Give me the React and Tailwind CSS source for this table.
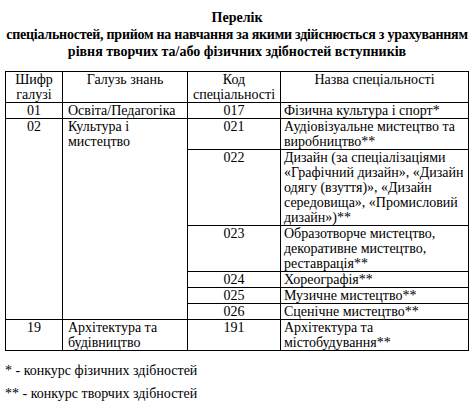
import React from 'react';

const rows = [
  { code: '017', name: 'Фізична культура і спорт*' },
  { code: '021', name: 'Аудіовізуальне мистецтво та виробництво**' },
  { code: '022', name: 'Дизайн (за спеціалізаціями «Графічний дизайн», «Дизайн одягу (взуття)», «Дизайн середовища», «Промисловий дизайн»)**' },
  { code: '023', name: 'Образотворче мистецтво, декоративне мистецтво, реставрація**' },
  { code: '024', name: 'Хореографія**' },
  { code: '025', name: 'Музичне мистецтво**' },
  { code: '026', name: 'Сценічне мистецтво**' },
];

const cell = 'border border-black align-top px-[3px] py-0 font-normal';
const field = 'border border-black align-top pl-[5px] pr-[3px] py-0 font-normal';

export default function App() {
  return (
    <div className="bg-white text-black w-[474px] h-[414px] overflow-hidden pt-[9px] font-['Liberation_Serif',serif]">
      <div className="text-center font-bold text-[14px] leading-[17px]">
        <p>Перелік</p>
        <p className="whitespace-nowrap tracking-[-0.25px]">
          спеціальностей, прийом на навчання за якими здійснюється з урахуванням
        </p>
        <p>рівня творчих та/або фізичних здібностей вступників</p>
      </div>

      <table className="ml-[5px] mt-[11px] w-[463px] border-collapse table-fixed text-[14px] leading-[15px]">
        <colgroup>
          <col className="w-[57px]" />
          <col className="w-[125px]" />
          <col className="w-[93px]" />
          <col className="w-[188px]" />
        </colgroup>
        <thead>
          <tr>
            <th className={`${cell} text-center`}>Шифр<br />галузі</th>
            <th className={`${cell} text-center`}>Галузь знань</th>
            <th className={`${cell} text-center`}>Код<br />спеціальності</th>
            <th className={`${cell} text-center`}>Назва спеціальності</th>
          </tr>
        </thead>
        <tbody>
          <tr>
            <td className={`${cell} text-center`}>01</td>
            <td className={field}>Освіта/Педагогіка</td>
            <td className={`${cell} text-center`}>{rows[0].code}</td>
            <td className={cell}>{rows[0].name}</td>
          </tr>
          {rows.slice(1).map((r, i) => (
            <tr key={r.code}>
              {i === 0 && (
                <>
                  <td rowSpan={6} className={`${cell} text-center`}>02</td>
                  <td rowSpan={6} className={field}>Культура і<br />мистецтво</td>
                </>
              )}
              <td className={`${cell} text-center`}>{r.code}</td>
              <td className={cell}>{r.name}</td>
            </tr>
          ))}
          <tr>
            <td className={`${cell} text-center`}>19</td>
            <td className={field}>Архітектура та<br />будівництво</td>
            <td className={`${cell} text-center`}>191</td>
            <td className={cell}>Архітектура та<br />містобудування**</td>
          </tr>
        </tbody>
      </table>

      <div className="ml-[5px] mt-[12px] text-[14px] leading-[15px]">
        <p>* - конкурс фізичних здібностей</p>
        <p className="mt-[8px]">** - конкурс творчих здібностей</p>
      </div>
    </div>
  );
}
